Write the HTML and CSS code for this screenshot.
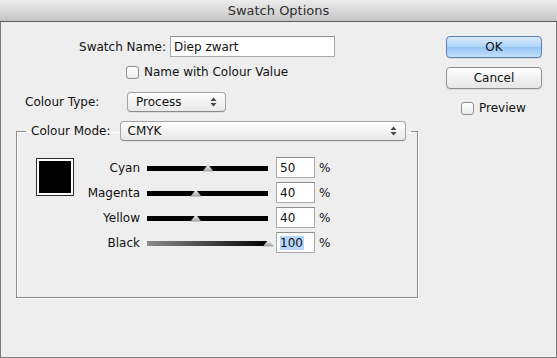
FILE: index.html
```html
<!DOCTYPE html>
<html lang="en">
<head>
    <meta charset="UTF-8">
    <title>Swatch Options</title>
    <link rel="stylesheet" href="styles.css">
</head>
<body>

<div class="window">
    <div class="titlebar">Swatch Options</div>

    <div class="content">
        <div class="main">
            <div class="name-row">
                <label class="name-label" for="swatch-name">Swatch Name:</label>
                <input class="text-field name-field" id="swatch-name" type="text" value="Diep zwart">
            </div>

            <div class="check-row name-check">
                <span class="checkbox"></span>
                <span>Name with Colour Value</span>
            </div>

            <div class="type-row">
                <span class="type-label">Colour Type:</span>
                <div class="popup type-popup">
                    <span>Process</span>
                    <svg class="arrows" width="7" height="10" viewBox="0 0 7 10"><path d="M3.5 0.5 L6.5 4 L0.5 4 Z M0.5 6 L6.5 6 L3.5 9.5 Z" fill="#444"/></svg>
                </div>
            </div>

            <fieldset class="mode-box">
                <legend class="mode-legend">
                    <span>Colour Mode:</span>
                    <div class="popup mode-popup">
                        <span>CMYK</span>
                        <svg class="arrows" width="7" height="10" viewBox="0 0 7 10"><path d="M3.5 0.5 L6.5 4 L0.5 4 Z M0.5 6 L6.5 6 L3.5 9.5 Z" fill="#444"/></svg>
                    </div>
                </legend>

                <div class="mode-body">
                    <div class="swatch"></div>

                    <div class="channels">
                        <div class="channel">
                            <span class="channel-label">Cyan</span>
                            <div class="slider"><span class="thumb" style="left: 50%"></span></div>
                            <span class="text-field value">50</span>
                            <span class="pct">%</span>
                        </div>
                        <div class="channel">
                            <span class="channel-label">Magenta</span>
                            <div class="slider"><span class="thumb" style="left: 40%"></span></div>
                            <span class="text-field value">40</span>
                            <span class="pct">%</span>
                        </div>
                        <div class="channel">
                            <span class="channel-label">Yellow</span>
                            <div class="slider"><span class="thumb" style="left: 40%"></span></div>
                            <span class="text-field value">40</span>
                            <span class="pct">%</span>
                        </div>
                        <div class="channel">
                            <span class="channel-label">Black</span>
                            <div class="slider slider-black"><span class="thumb" style="left: 100%"></span></div>
                            <span class="text-field value"><span class="selected">100</span></span>
                            <span class="pct">%</span>
                        </div>
                    </div>
                </div>
            </fieldset>
        </div>

        <div class="side">
            <button class="button default-button">OK</button>
            <button class="button">Cancel</button>
            <div class="check-row preview-check">
                <span class="checkbox"></span>
                <span>Preview</span>
            </div>
        </div>
    </div>
</div>

</body>
</html>
```

FILE: styles.css
```css
body {
    margin: 0;
    font-family: "DejaVu Sans", sans-serif;
    font-size: 12px;
    color: #111;
    background-color: #eeeeee;
}

.window {
    width: 557px;
    height: 358px;
    box-sizing: border-box;
    border: 1px solid #7c7c7c;
    border-top: none;
    background-color: #eeeeee;
}

.titlebar {
    height: 21px;
    line-height: 21px;
    margin: 0 -1px;
    text-align: center;
    font-size: 13px;
    color: #2e2e2e;
    background: linear-gradient(#ececec, #d6d6d6 60%, #c4c4c4);
    border-bottom: 1px solid #5c5c5c;
}

.content {
    display: flex;
}

.main {
    width: 430px;
}

/* name row */
.name-row {
    display: flex;
    align-items: center;
    margin-top: 14px;
}

.name-label {
    width: 165px;
    text-align: right;
    margin-right: 4px;
}

.text-field {
    box-sizing: border-box;
    border: 1px solid #a9a9a9;
    border-top-color: #8e8e8e;
    background-color: #fff;
    font-family: inherit;
    font-size: 12px;
    color: #111;
    padding: 0 3px;
}

.name-field {
    width: 165px;
    height: 21px;
    outline: none;
}

.check-row {
    display: flex;
    align-items: center;
}

.checkbox {
    width: 13px;
    height: 13px;
    box-sizing: border-box;
    border: 1px solid #8d8d8d;
    border-radius: 3px;
    background: linear-gradient(#ffffff, #ececec);
    margin-right: 5px;
}

.name-check {
    margin-top: 8px;
    margin-left: 125px;
}

/* colour type */
.type-row {
    display: flex;
    align-items: center;
    margin-top: 13px;
}

.type-label {
    width: 102px;
    padding-left: 24px;
}

.popup {
    display: flex;
    align-items: center;
    justify-content: space-between;
    box-sizing: border-box;
    height: 20px;
    padding: 0 8px;
    border: 1px solid #a3a3a3;
    border-bottom-color: #8a8a8a;
    border-radius: 4px;
    background: linear-gradient(#ffffff, #f3f3f3 50%, #e9e9e9);
    box-shadow: 0 1px 0 rgba(0, 0, 0, 0.06);
}

.type-popup {
    width: 99px;
}

.arrows {
    display: block;
}

/* colour mode group */
.mode-box {
    width: 402px;
    height: 177px;
    box-sizing: border-box;
    margin: 9px 0 0 15px;
    padding: 0 0 0 9px;
    border: 1px solid #8c8c8c;
    box-shadow: 1px 1px 0 #fff, inset 1px 1px 0 #fff;
}

.mode-legend {
    display: flex;
    align-items: center;
    padding: 0 5px;
}

.mode-popup {
    width: 286px;
    margin-left: 9px;
    padding-left: 7px;
}

.mode-body {
    display: flex;
    padding-top: 17px;
}

.swatch {
    width: 38px;
    height: 38px;
    box-sizing: border-box;
    margin-left: 10px;
    background-color: #000;
    border: 1px solid #2a2a2a;
    box-shadow: inset 0 0 0 2px #fff;
}

.channels {
    display: flex;
    flex-direction: column;
    gap: 4px;
    margin-top: -1px;
}

.channel {
    display: flex;
    align-items: center;
    height: 21px;
}

.channel-label {
    width: 60px;
    margin-left: 6px;
    text-align: right;
}

.slider {
    position: relative;
    width: 121px;
    height: 5px;
    margin: 1px 8px 0 7px;
    background-color: #000;
}

.slider-black {
    background: linear-gradient(to right, #8a8a8a, #000);
}

.thumb {
    position: absolute;
    bottom: -1px;
    width: 11px;
    height: 7px;
    margin-left: -5px;
    background: linear-gradient(#f4f4f4, #9a9a9a);
    clip-path: polygon(50% 0, 100% 100%, 0 100%);
}

.value {
    display: flex;
    align-items: center;
    width: 39px;
    height: 21px;
    padding-left: 3px;
}

.selected {
    background-color: #b6d6fc;
    padding-right: 1px;
}

.pct {
    margin-left: 4px;
}

/* buttons */
.side {
    display: flex;
    flex-direction: column;
    padding-left: 15px;
    padding-top: 14px;
}

.button {
    width: 96px;
    height: 22px;
    margin-bottom: 9px;
    font-family: inherit;
    font-size: 12px;
    color: #111;
    border: 1px solid #8f8f8f;
    border-radius: 4px;
    background: linear-gradient(#ffffff, #f2f2f2 50%, #e6e6e6);
    box-shadow: 0 1px 0 rgba(0, 0, 0, 0.08);
}

.default-button {
    border-color: #5a7fb0;
    background: linear-gradient(#d8ebfc, #aed3f7 50%, #94c4f4 51%, #c4e2fd);
}

.preview-check {
    margin-left: 15px;
    margin-top: 3px;
}
```
